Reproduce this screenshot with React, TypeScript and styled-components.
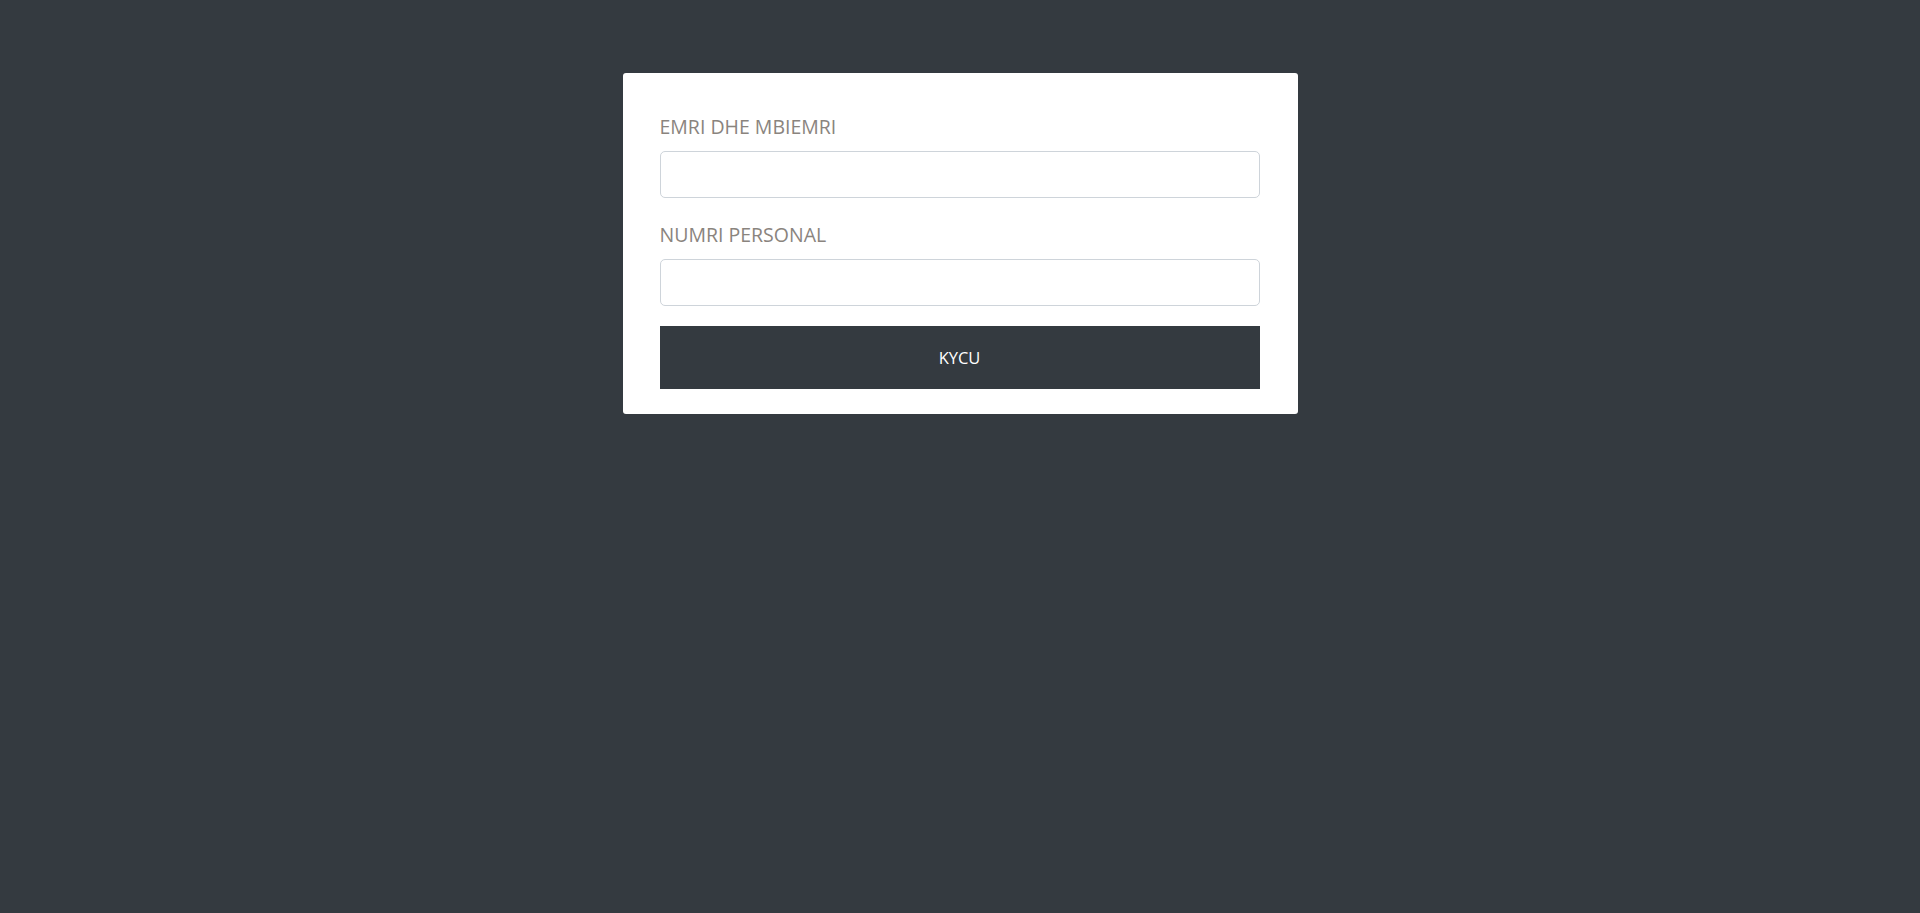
import React, { useState } from "react";
import styled, { createGlobalStyle } from "styled-components";

const GlobalStyle = createGlobalStyle`
  html, body {
    margin: 0;
    padding: 0;
    height: 100%;
    background-color: #343a40;
    font-family: "Open Sans", "Noto Sans", sans-serif;
  }
  #root {
    min-height: 100%;
  }
`;

const Page = styled.div`
  display: flex;
  justify-content: center;
  padding-top: 73px;
`;

const Card = styled.form`
  width: 675px;
  box-sizing: border-box;
  background-color: #fff;
  border-radius: 3px;
  padding: 37px 38px 25px 37px;
  display: flex;
  flex-direction: column;
`;

const FormGroup = styled.div`
  display: flex;
  flex-direction: column;
  margin-bottom: 20px;
`;

const Label = styled.label`
  font-size: 19.5px;
  line-height: 30px;
  color: #8a847e;
  padding-top: 2px;
  margin-bottom: 9px;
`;

const FormInput = styled.input`
  height: 47px;
  box-sizing: border-box;
  border: 1px solid #ced4da;
  border-radius: 5px;
  padding: 8px 15px;
  font-size: 19px;
  font-family: inherit;

  &:focus {
    outline: none;
    border-color: #80bdff;
  }
`;

const SubmitButton = styled.button`
  height: 63px;
  border: none;
  background-color: #343a40;
  color: #fff;
  font-family: inherit;
  font-size: 16.5px;
  cursor: pointer;
`;

const App = () => {
  const [name, setName] = useState("");
  const [personalNo, setPersonalNo] = useState("");

  const handleSubmit = (event: any) => {
    event.preventDefault();
  };

  return (
    <Page>
      <GlobalStyle />
      <Card onSubmit={handleSubmit}>
        <FormGroup>
          <Label htmlFor="emri">EMRI DHE MBIEMRI</Label>
          <FormInput
            id="emri"
            type="text"
            value={name}
            onChange={(e) => setName(e.target.value)}
          />
        </FormGroup>
        <FormGroup>
          <Label htmlFor="numri">NUMRI PERSONAL</Label>
          <FormInput
            id="numri"
            type="text"
            value={personalNo}
            onChange={(e) => setPersonalNo(e.target.value)}
          />
        </FormGroup>
        <SubmitButton type="submit">KYCU</SubmitButton>
      </Card>
    </Page>
  );
};

export default App;
